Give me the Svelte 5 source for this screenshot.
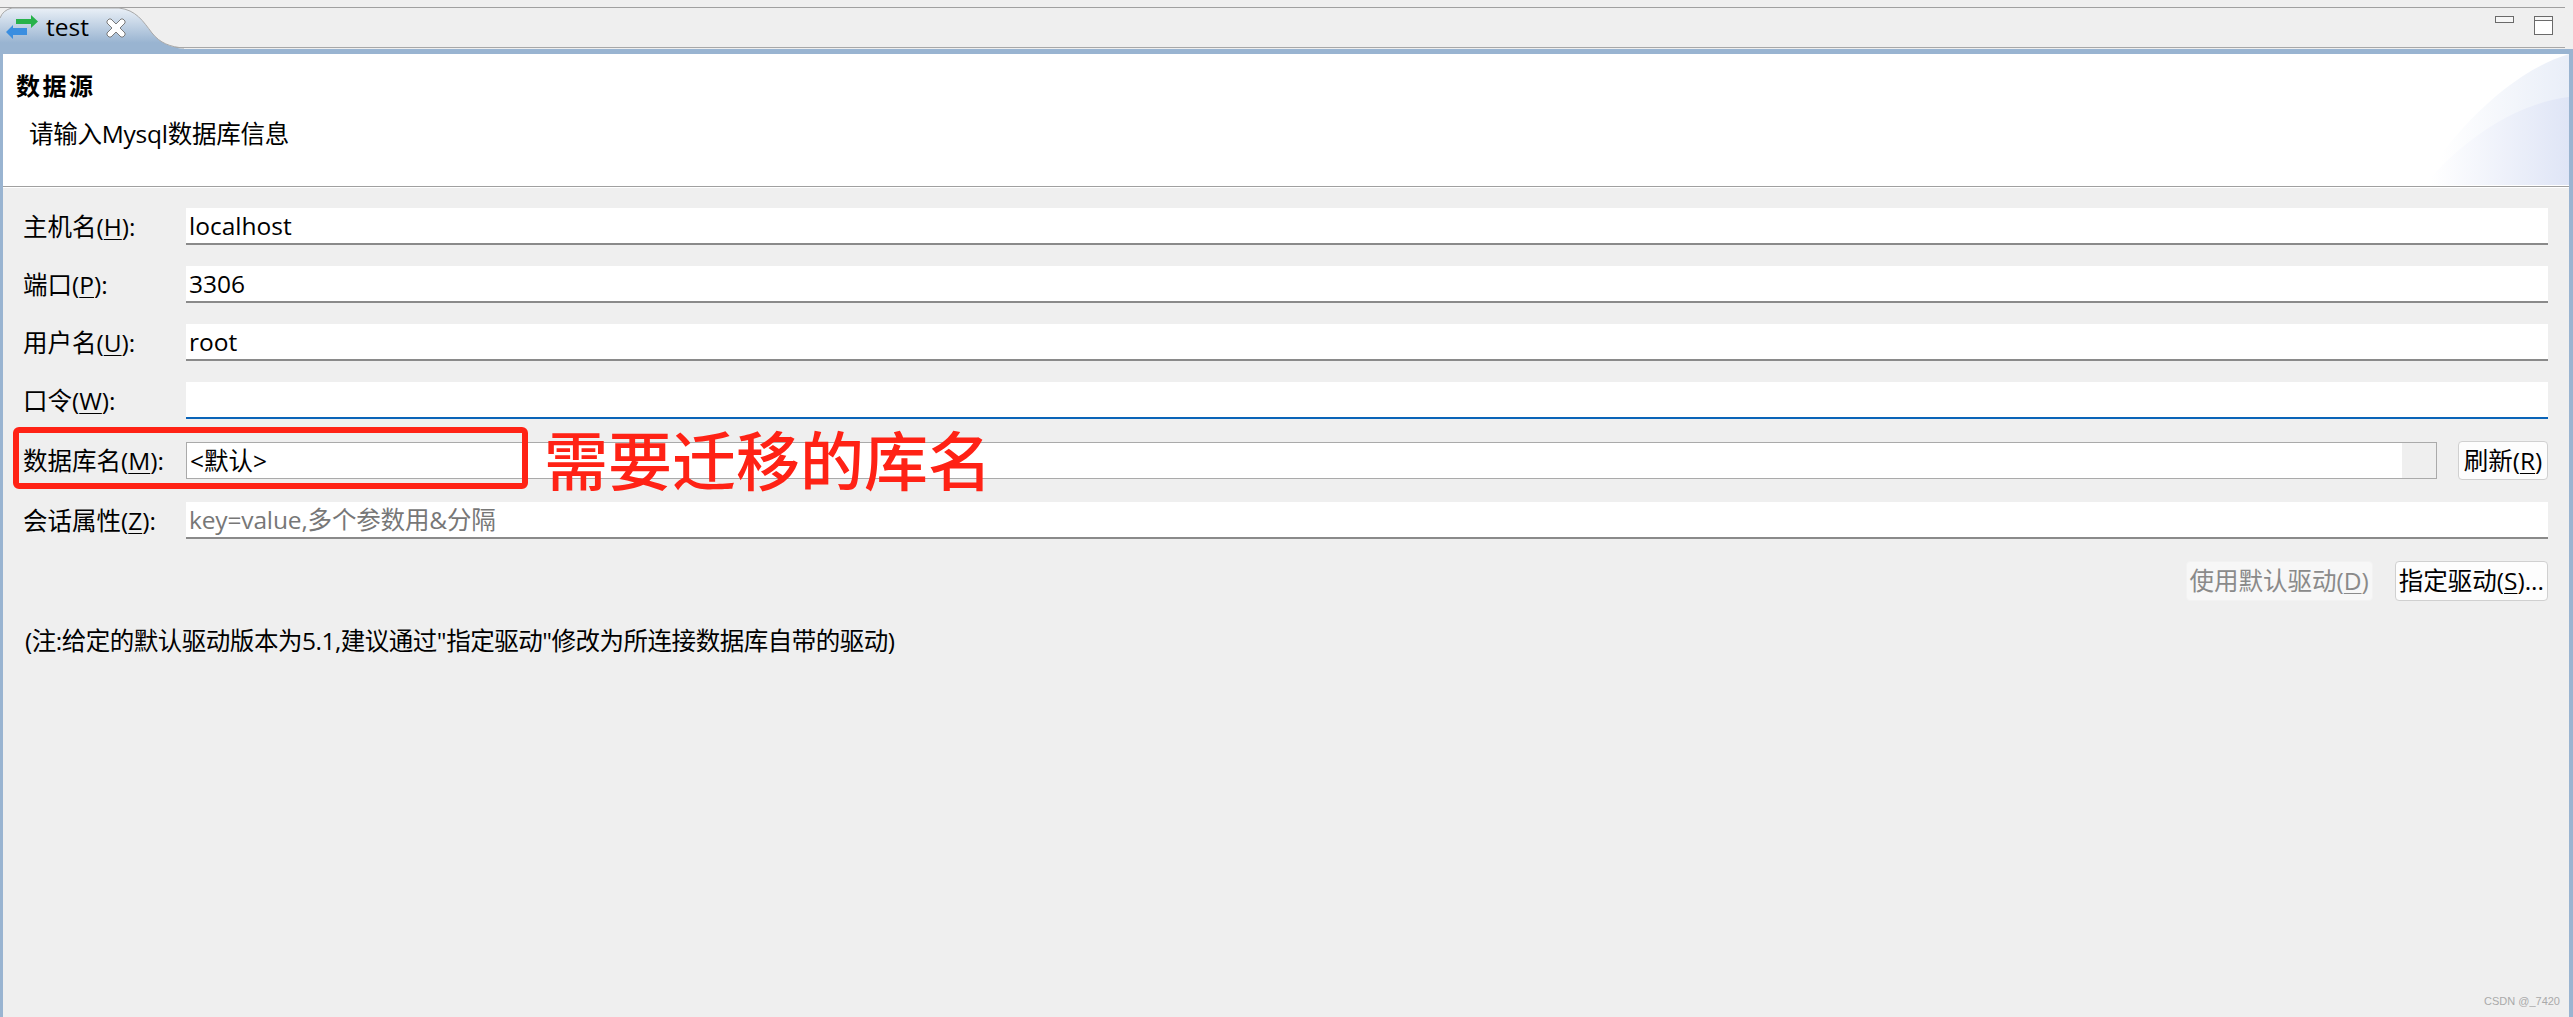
<script lang="ts">
  const fields = [
    { label: '主机名(', key: 'H', value: 'localhost' },
    { label: '端口(', key: 'P', value: '3306' },
    { label: '用户名(', key: 'U', value: 'root' },
    { label: '口令(', key: 'W', value: '', focused: true },
  ];
</script>

<div class="window">
  <div class="tabbar">
    <svg class="tab-shape" width="190" height="42" viewBox="0 0 190 42">
      <defs>
        <linearGradient id="tabfill" x1="0" y1="0" x2="0" y2="1">
          <stop offset="0" stop-color="#eaf0f7" />
          <stop offset="0.85" stop-color="#99b4d1" />
        </linearGradient>
      </defs>
      <path d="M0 42V11Q3 3 12 1H119C136 3 143 14 152 26C160 36 170 40 184 42Z" fill="url(#tabfill)" />
      <path d="M0 11Q3 3 12 1H119C136 3 143 14 152 26C160 36 170 40 184 41" fill="none" stroke="#a8a8a8" />
    </svg>
    <div class="tab">
      <svg class="tab-icon" width="34" height="26" viewBox="0 0 34 26">
        <path d="M11 5h15V1l7 6.500-7 6.500v-4H11z" fill="#27b24a" />
        <path d="M22 14H8v-3l-7 7 7 7v-4h14z" fill="#3a8ee0" />
      </svg>
      <span class="tab-name">test</span>
      <svg class="tab-close" width="20" height="20" viewBox="0 0 20 20">
        <path d="M1 3l2-2h2l5 5 5-5h2l2 2v2l-5 5 5 5v2l-2 2h-2l-5-5-5 5H3l-2-2v-2l5-5-5-5z" fill="#fff" stroke="#7a7a7a" stroke-width="1" />
      </svg>
    </div>
    <div class="win-btns">
      <span class="win-min"></span>
      <span class="win-max"></span>
    </div>
  </div>

  <div class="content">
    <header class="head">
      <svg class="head-art" width="150" height="131" viewBox="0 0 150 131" preserveAspectRatio="none">
        <defs>
          <linearGradient id="art1" x1="0" y1="0.5" x2="1" y2="0.5">
            <stop offset="0.15" stop-color="#ffffff" />
            <stop offset="1" stop-color="#e9eef8" />
          </linearGradient>
          <linearGradient id="art2" x1="0" y1="0.5" x2="1" y2="0.5">
            <stop offset="0.05" stop-color="#ffffff" />
            <stop offset="1" stop-color="#dfe5f6" />
          </linearGradient>
        </defs>
        <path d="M0 131C30 85 85 20 150 0V131Z" fill="url(#art1)" />
        <path d="M5 131C45 85 95 50 150 43V131Z" fill="url(#art2)" />
      </svg>
      <h1>数据源</h1>
      <p>请输入Mysql数据库信息</p>
    </header>

    <div class="form">
      {#each fields as f}
        <div class="row">
          <span class="label">{f.label}<u>{f.key}</u>):</span>
          <div class="field" class:focused={f.focused}>{f.value}</div>
        </div>
      {/each}

      <div class="row combo-row">
        <span class="label">数据库名(<u>M</u>):</span>
        <div class="combo">
          <span class="combo-text">&lt;默认&gt;</span>
          <span class="combo-arrow"></span>
        </div>
        <button class="btn refresh">刷新(<u>R</u>)</button>
      </div>

      <div class="row">
        <span class="label">会话属性(<u>Z</u>):</span>
        <div class="field hint">key=value,多个参数用&amp;分隔</div>
      </div>

      <div class="actions">
        <button class="btn off">使用默认驱动(<u>D</u>)</button>
        <button class="btn">指定驱动(<u>S</u>)...</button>
      </div>

      <p class="note">(注:给定的默认驱动版本为5.1,建议通过"指定驱动"修改为所连接数据库自带的驱动)</p>
    </div>
  </div>

  <div class="mark-box"></div>
  <div class="mark-text">需要迁移的库名</div>
  <div class="watermark">CSDN @_7420</div>
</div>

<style>
  :global(body) {
    margin: 0;
    background: #efefef;
  }

  .window {
    position: relative;
    width: 2573px;
    height: 1017px;
    overflow: hidden;
    display: flex;
    flex-direction: column;
    background: #efefef;
    color: #000;
    font-family: "Open Sans", "Noto Sans CJK SC", sans-serif;
    font-size: 24.500px;
  }

  .tabbar {
    position: relative;
    height: 41px;
    margin-top: 7px;
    box-sizing: border-box;
    border-top: 1px solid #a0a0a0;
    border-bottom: 1px solid #a8a8a8;
    margin-right: 8px;
    display: flex;
    justify-content: space-between;
    flex: none;
  }

  .tab-shape {
    position: absolute;
    left: 0;
    top: -1px;
  }

  .tab {
    position: relative;
    display: flex;
    align-items: center;
    height: 34px;
    padding: 4px 0 0 5px;
    box-sizing: border-box;
  }

  .tab-icon {
    display: block;
  }

  .tab-name {
    margin-left: 7px;
    line-height: 1;
    color: #000;
  }

  .tab-close {
    margin-left: 17px;
    margin-top: 2px;
  }

  .win-btns {
    display: flex;
    gap: 20px;
    align-items: flex-start;
    padding: 8px 12px 0 0;
  }

  .win-min,
  .win-max {
    display: block;
    box-sizing: border-box;
    width: 19px;
    border: 1.500px solid #6a6a6a;
    background: #f6f6f6;
  }

  .win-min {
    height: 7px;
  }

  .win-max {
    height: 19px;
    background: linear-gradient(#f6f6f6 3px, #6a6a6a 3px, #6a6a6a 4.500px, #fff 4.500px);
  }

  .content {
    flex: 1;
    min-height: 0;
    margin-top: 1px;
    border: 0 solid #99b4d1;
    border-width: 5px 4px 0 3px;
    display: flex;
    flex-direction: column;
  }

  .head {
    position: relative;
    height: 133px;
    box-sizing: border-box;
    flex: none;
    background: #fff;
    border-bottom: 1px solid #a0a0a0;
    box-shadow: 0 1px 0 #fff;
  }

  .head-art {
    position: absolute;
    right: 0;
    top: 0;
  }

  .head h1 {
    position: relative;
    margin: 0;
    padding: 17px 0 0 13px;
    font-size: 24px;
    line-height: 30px;
    font-weight: 700;
    letter-spacing: 2.500px;
  }

  .head p {
    position: relative;
    margin: 0;
    padding: 18px 0 0 26px;
    line-height: 30px;
    letter-spacing: -0.250px;
  }

  .form {
    padding: 21px 21px 0 20px;
    display: flex;
    flex-direction: column;
    gap: 21px;
  }

  .row {
    display: flex;
    align-items: center;
    height: 37px;
  }

  .label {
    flex: none;
    width: 163px;
    white-space: nowrap;
    line-height: 1.2;
  }

  .field {
    flex: 1;
    height: 37px;
    box-sizing: border-box;
    padding-left: 3px;
    background: #fff;
    border-bottom: 2px solid #8a8a8a;
    line-height: 35px;
    white-space: nowrap;
  }

  .field.focused {
    border-bottom-color: #0a64b8;
  }

  .field.hint {
    color: #777;
    letter-spacing: -0.150px;
  }

  .combo-row {
    height: 39px;
    margin: 1px 0;
  }

  .combo {
    flex: 1;
    height: 37px;
    box-sizing: border-box;
    display: flex;
    justify-content: space-between;
    background: #fff;
    border: 1px solid #aaa;
    line-height: 35px;
  }

  .combo-text {
    padding-left: 3px;
  }

  .combo-arrow {
    width: 34px;
    background: #efefef;
  }

  .btn {
    height: 40px;
    box-sizing: border-box;
    padding: 0 3px;
    background: #fdfdfd;
    border: 1px solid #d0d0d0;
    border-radius: 4px;
    font: inherit;
    line-height: 36px;
    color: #000;
    white-space: nowrap;
  }

  .refresh {
    margin-left: 21px;
    width: 90px;
    height: 39px;
  }

  .btn.off {
    background: #f7f7f7;
    border-color: #f2f2f2;
    color: #8a8a8a;
  }

  .actions {
    display: flex;
    justify-content: flex-end;
    gap: 22px;
    padding-top: 1px;
  }

  .note {
    margin: 4px 0 0 2px;
    font-size: 24.500px;
    line-height: 30px;
    letter-spacing: -0.480px;
    white-space: nowrap;
  }

  u {
    text-underline-offset: 3px;
    text-decoration-thickness: 1px;
  }

  .mark-box {
    position: absolute;
    left: 13px;
    top: 427px;
    width: 515px;
    height: 62px;
    box-sizing: border-box;
    border: 6px solid #ff2215;
    border-radius: 6px;
  }

  .mark-text {
    position: absolute;
    left: 544px;
    top: 415px;
    font-family: "Noto Sans CJK SC", sans-serif;
    font-size: 64px;
    font-weight: 500;
    line-height: 84px;
    color: #ff2215;
    white-space: nowrap;
  }

  .watermark {
    position: absolute;
    left: 2484px;
    top: 995px;
    font-family: "Liberation Sans", sans-serif;
    font-size: 11px;
    color: #aaa;
    white-space: nowrap;
  }
</style>
